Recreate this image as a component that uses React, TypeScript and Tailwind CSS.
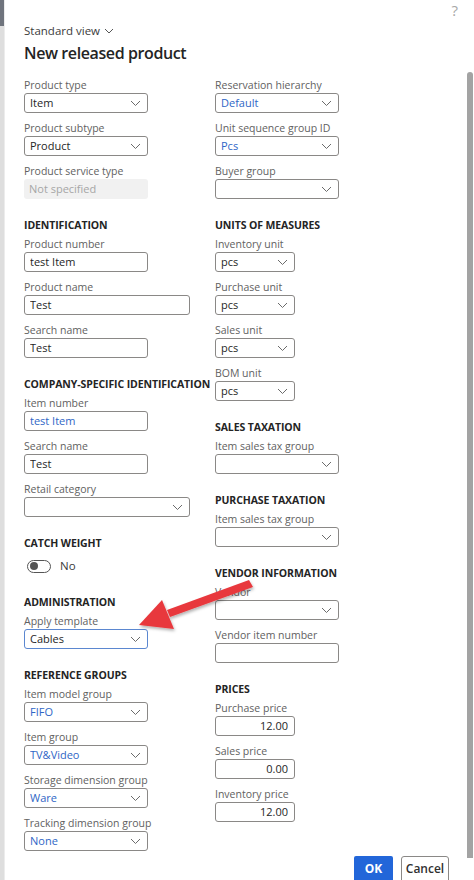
import React from 'react';

type FieldProps = {
    label: string;
    value?: string;
    width?: string;
    blue?: boolean;
    select?: boolean;
    disabled?: boolean;
    right?: boolean;
    focus?: boolean;
};

const Chevron = () => (
    <svg width="11" height="7" viewBox="0 0 11 7" fill="none" className="shrink-0">
        <path d="M1 1l4.5 4.5L10 1" stroke="#6b6b6b" strokeWidth="1" />
    </svg>
);

const Field: React.FC<FieldProps> = ({ label, value = '', width = 'w-[124px]', blue, select = true, disabled, right, focus }) => (
    <div className="mb-[8px]">
        <div className="h-[14px] text-[10.5px] leading-[14px] text-[#616161] whitespace-nowrap">{label}</div>
        <div
            className={`mt-[1px] h-[20px] ${width} rounded-[3px] flex items-center pl-[5px] pr-[6px] text-[11px] ${
                disabled ? 'bg-[#f1f1f1] text-[#a6a6a6]' : focus ? 'border border-[#5b87d0]' : 'border border-[#8a8886]'
            } ${blue ? 'text-[#2f66c6]' : disabled ? '' : 'text-[#262626]'}`}
        >
            <span className={`flex-1 truncate ${right ? 'text-right' : ''}`}>{value}</span>
            {select && !disabled && <Chevron />}
        </div>
    </div>
);

const Heading: React.FC<{ children: React.ReactNode }> = ({ children }) => (
    <div className="mt-[11px] mb-[5px] h-[14px] text-[10.5px] leading-[14px] font-bold tracking-[-0.1px] text-[#242424] whitespace-nowrap">{children}</div>
);

export default function App() {
    return (
        <div className="relative w-[474px] h-[880px] overflow-hidden bg-white flex" style={{ fontFamily: '"Open Sans", "Noto Sans", sans-serif' }}>
            {/* left edge of the page behind the panel */}
            <div className="w-[5px] shrink-0 flex flex-col bg-[#dedede] border-r border-[#ececec]">
                <div className="h-[26px] bg-[#6f747d]" />
            </div>

            <div className="flex-1 pl-[19px] pr-[2px]">
                <div className="flex justify-end h-[20px] pr-[6px] pt-[1px] text-[15px] leading-[18px] text-[#a8a8a8]">?</div>
                <div className="flex items-center gap-[4px] h-[22px] text-[11.5px] text-[#3b3b3b]">
                    Standard view
                    <svg width="10" height="6" viewBox="0 0 10 6" fill="none">
                        <path d="M1 1l4 4 4-4" stroke="#555" strokeWidth="1" />
                    </svg>
                </div>
                <div className="h-[22px] text-[16px] leading-[22px] font-semibold tracking-[-0.4px] text-[#242424]">New released product</div>

                <div className="mt-[14px] flex">
                    <div className="w-[191px] shrink-0 flex flex-col">
                        <Field label="Product type" value="Item" />
                        <Field label="Product subtype" value="Product" />
                        <Field label="Product service type" value="Not specified" disabled />

                        <Heading>IDENTIFICATION</Heading>
                        <Field label="Product number" value="test Item" select={false} />
                        <Field label="Product name" value="Test" select={false} width="w-[166px]" />
                        <Field label="Search name" value="Test" select={false} />

                        <Heading>COMPANY-SPECIFIC IDENTIFICATION</Heading>
                        <Field label="Item number" value="test Item" select={false} blue />
                        <Field label="Search name" value="Test" select={false} />
                        <Field label="Retail category" width="w-[166px]" />

                        <Heading>CATCH WEIGHT</Heading>
                        <div className="h-[20px] mt-[1px] flex items-center gap-[9px] pl-[3px] text-[11.5px] text-[#3b3b3b]">
                            <div className="w-[24px] h-[13px] rounded-full border border-[#555] flex items-center px-[2px]">
                                <div className="w-[8px] h-[8px] rounded-full bg-[#555]" />
                            </div>
                            No
                        </div>
                        <div className="h-[8px]" />

                        <Heading>ADMINISTRATION</Heading>
                        <Field label="Apply template" value="Cables" focus />

                        <Heading>REFERENCE GROUPS</Heading>
                        <Field label="Item model group" value="FIFO" blue />
                        <Field label="Item group" value="TV&Video" blue />
                        <Field label="Storage dimension group" value="Ware" blue />
                        <Field label="Tracking dimension group" value="None" blue />
                    </div>

                    <div className="flex-1 flex flex-col">
                        <Field label="Reservation hierarchy" value="Default" blue />
                        <Field label="Unit sequence group ID" value="Pcs" blue />
                        <Field label="Buyer group" />

                        <Heading>UNITS OF MEASURES</Heading>
                        <Field label="Inventory unit" value="pcs" width="w-[80px]" />
                        <Field label="Purchase unit" value="pcs" width="w-[80px]" />
                        <Field label="Sales unit" value="pcs" width="w-[80px]" />
                        <Field label="BOM unit" value="pcs" width="w-[80px]" />

                        <Heading>SALES TAXATION</Heading>
                        <Field label="Item sales tax group" />

                        <Heading>PURCHASE TAXATION</Heading>
                        <Field label="Item sales tax group" />

                        <Heading>VENDOR INFORMATION</Heading>
                        <Field label="Vendor" />
                        <Field label="Vendor item number" select={false} />

                        <Heading>PRICES</Heading>
                        <Field label="Purchase price" value="12.00" width="w-[80px]" select={false} right />
                        <Field label="Sales price" value="0.00" width="w-[80px]" select={false} right />
                        <Field label="Inventory price" value="12.00" width="w-[80px]" select={false} right />

                        <div className="mt-[26px] flex gap-[8px] pl-[139px]">
                            <button className="w-[39px] h-[26px] rounded-t-[2px] bg-[#2266d9] text-white text-[12px] font-bold">OK</button>
                            <button className="w-[48px] h-[26px] rounded-t-[3px] border border-[#8a8886] bg-white text-[#303030] text-[12px] font-semibold">Cancel</button>
                        </div>
                    </div>
                </div>
            </div>

            {/* scrollbar */}
            <div className="w-[8px] shrink-0 pt-[72px] flex justify-end pr-[1px]">
                <div className="w-[6px] h-[786px] bg-[#a3a3a3] rounded-t-[3px]" />
            </div>

            {/* annotation arrow */}
            <svg className="absolute left-[130px] top-[570px] pointer-events-none" width="130" height="70" viewBox="130 570 130 70">
                <defs>
                    <filter id="sh" x="-20%" y="-20%" width="140%" height="160%">
                        <feDropShadow dx="1" dy="2" stdDeviation="1.5" floodColor="#000" floodOpacity="0.3" />
                    </filter>
                </defs>
                <g filter="url(#sh)" fill="#e8383d">
                    <path d="M249 580 L253 587 L170 617 L167 610 Z" />
                    <path d="M139 625 L162 600 L174 629 Z" />
                </g>
            </svg>
        </div>
    );
}
